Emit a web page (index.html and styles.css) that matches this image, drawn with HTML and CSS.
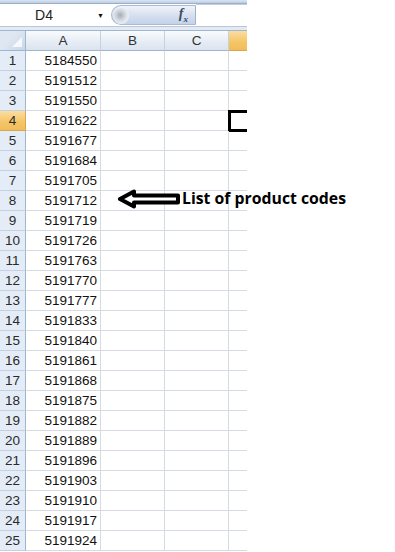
FILE: index.html
```html
<!DOCTYPE html>
<html lang="en">
<head>
  <meta charset="UTF-8">
  <title>List of product codes</title>
  <link rel="stylesheet" href="styles.css">
</head>
<body>
  <main class="sheet">
    <div class="ribbon-edge"></div>
    <div class="formula-bar">
      <div class="name-box">
        <span class="name">D4</span>
        <span class="drop">&#9660;</span>
      </div>
      <div class="fx-pill">
        <span class="knob"></span>
        <span class="fx">f<sub>x</sub></span>
      </div>
      <div class="formula-input"></div>
    </div>
    <div class="bar-gap"></div>

    <div class="grid" id="grid">
      <div class="corner"></div>
      <div class="col-head">A</div>
      <div class="col-head">B</div>
      <div class="col-head">C</div>
      <div class="col-head selected"></div>
    </div>
  </main>

  <div class="note">
    <svg class="arrow" width="64" height="20" viewBox="0 0 64 20">
      <polygon points="3,10 17,2.5 17,6.5 61,6.5 61,13.5 17,13.5 17,17.5" fill="#fff" stroke="#000" stroke-width="4" stroke-linejoin="round"/>
    </svg>
    <span class="note-text">List of product codes</span>
  </div>

  <script>
    var codes = [5184550, 5191512, 5191550, 5191622, 5191677, 5191684, 5191705, 5191712,
      5191719, 5191726, 5191763, 5191770, 5191777, 5191833, 5191840, 5191861, 5191868,
      5191875, 5191882, 5191889, 5191896, 5191903, 5191910, 5191917, 5191924];
    var grid = document.getElementById('grid');
    codes.forEach(function (code, i) {
      var row = i + 1;
      var html = '<div class="row-head' + (row === 4 ? ' selected' : '') + '">' + row + '</div>' +
        '<div class="cell num">' + code + '</div>' +
        '<div class="cell"></div>' +
        '<div class="cell"></div>' +
        '<div class="cell' + (row === 4 ? ' active' : '') + '"></div>';
      grid.insertAdjacentHTML('beforeend', html);
    });
  </script>
</body>
</html>
```

FILE: styles.css
```css
*, *::before, *::after {
  box-sizing: border-box;
  margin: 0;
  padding: 0;
}

body {
  background: #fff;
  font-family: "Liberation Sans", Arial, sans-serif;
  position: relative;
  height: 552px;
  overflow: hidden;
}

/* Sheet window */
.sheet {
  width: 247px;
  overflow: hidden;
  background: #fff;
}

.ribbon-edge {
  height: 4px;
  background: linear-gradient(#dbe5f1, #bccde3);
  border-bottom: 1px solid #9aafca;
}

.formula-bar {
  display: flex;
  height: 23px;
  background: #fff;
  border-bottom: 1px solid #b9c7da;
}

.name-box {
  width: 111px;
  display: flex;
  align-items: center;
  font-size: 14px;
  color: #222;
}

.name {
  width: 88px;
  text-align: center;
}

.drop {
  font-size: 7px;
  margin-left: 9px;
  color: #111;
}

.fx-pill {
  width: 85px;
  position: relative;
  display: flex;
  align-items: center;
  justify-content: flex-end;
  padding-right: 7px;
  margin: 1px 0;
  background: linear-gradient(#f0f4fa, #d3ddee 60%, #c4d2e8);
  border-radius: 11px 0 0 11px;
  border: 1px solid #a9b9d1;
  border-right: 1px solid #9fb1cb;
}

.knob {
  position: absolute;
  left: 1px;
  top: 2px;
  width: 16px;
  height: 16px;
  border-radius: 50%;
  background: radial-gradient(circle at 45% 45%, #a7acb3 0, #d8dde5 45%, #f3f6fa 80%);
}

.fx {
  font-family: "Liberation Serif", serif;
  font-style: italic;
  font-weight: bold;
  font-size: 14px;
  color: #3b4a60;
}

.fx sub {
  font-size: 9px;
}

.formula-input {
  flex: 1;
  background: #fff;
  border-top: 1px solid #c3cfe0;
}

.bar-gap {
  height: 4px;
  background: #e4eaf3;
  border-bottom: 1px solid #9eb6ce;
}

/* Cell grid */
.grid {
  display: grid;
  grid-template-columns: 26px 75px 64px 64px 64px;
  grid-auto-rows: 20px;
  font-size: 13.5px;
  color: #111;
}

.grid > div {
  border-right: 1px solid #d6dbe3;
  border-bottom: 1px solid #d6dbe3;
}

.corner {
  background: linear-gradient(135deg, #dfe7f2 40%, #c9d6e8);
  position: relative;
  border-color: #9eb6ce !important;
}

.corner::after {
  content: '';
  position: absolute;
  right: 3px;
  bottom: 3px;
  border-left: 10px solid transparent;
  border-bottom: 10px solid #fff;
  opacity: 0.8;
}

.col-head {
  background: linear-gradient(#f9fbfd, #e7edf5 55%, #dbe3ee);
  border-color: #9eb6ce !important;
  border-right-color: #c5d1e0 !important;
  text-align: center;
  line-height: 19px;
  color: #333;
}

.row-head {
  background: #e4ecf7;
  border-right-color: #9eb6ce !important;
  border-bottom-color: #c5d1e0 !important;
  text-align: center;
  line-height: 19px;
  color: #2a2a2a;
}

.col-head.selected,
.row-head.selected {
  background: linear-gradient(#fbdca2, #f4c565 60%, #f1bd5a);
  border-color: #d9a64e !important;
}

.cell.num {
  text-align: right;
  padding-right: 3px;
  line-height: 19px;
}

.cell.active {
  outline: 3px solid #000;
  outline-offset: -2px;
}

/* Annotation */
.note {
  position: absolute;
  left: 117px;
  top: 189px;
  display: flex;
  align-items: center;
}

.arrow {
  display: block;
}

.note-text {
  font-family: "Open Sans", sans-serif;
  font-weight: bold;
  font-size: 15.8px;
  color: #000;
  margin-left: 1px;
  margin-top: -3px;
}
```
